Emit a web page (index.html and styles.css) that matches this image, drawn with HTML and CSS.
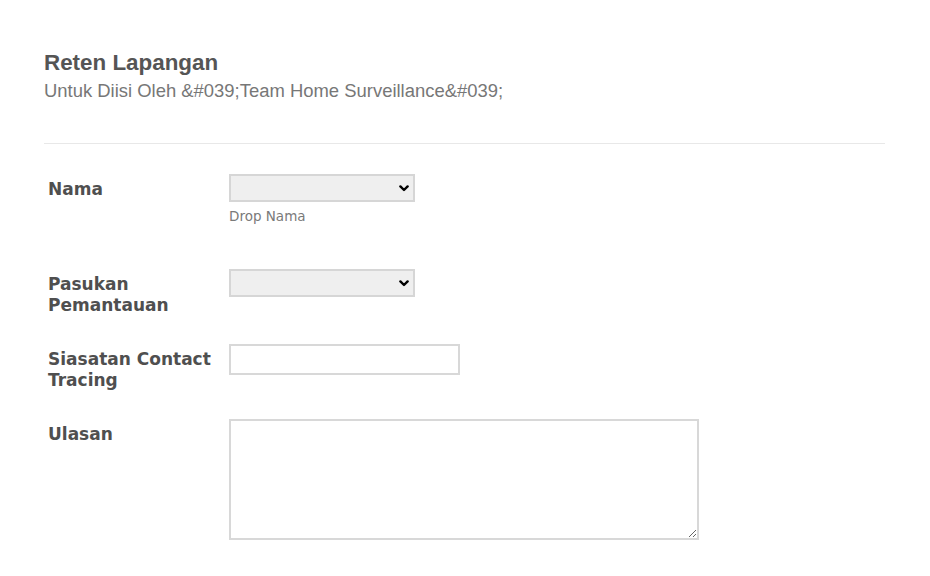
FILE: index.html
```html
<!DOCTYPE html>
<html lang="ms">
<head>
<meta charset="utf-8">
<title>Reten Lapangan</title>
<link rel="stylesheet" href="styles.css">
</head>
<body>
<div class="page">
  <header class="head">
    <h3 class="title">Reten Lapangan</h3>
    <p class="subtitle">Untuk Diisi Oleh &amp;#039;Team Home Surveillance&amp;#039;</p>
  </header>
  <hr class="rule">
  <form class="form">
    <div class="row row-first">
      <label class="label">Nama</label>
      <div class="field">
        <div class="select-wrap">
          <select class="select"><option></option></select>
          <svg class="chev" width="10" height="7" viewBox="0 0 10 7"><path d="M1.4 1.4 L5 5 L8.6 1.4" fill="none" stroke="#000" stroke-width="2.4" stroke-linecap="round" stroke-linejoin="round"/></svg>
        </div>
        <div class="desc">Drop Nama</div>
      </div>
    </div>
    <div class="row">
      <label class="label">Pasukan Pemantauan</label>
      <div class="field">
        <div class="select-wrap">
          <select class="select"><option></option></select>
          <svg class="chev" width="10" height="7" viewBox="0 0 10 7"><path d="M1.4 1.4 L5 5 L8.6 1.4" fill="none" stroke="#000" stroke-width="2.4" stroke-linecap="round" stroke-linejoin="round"/></svg>
        </div>
      </div>
    </div>
    <div class="row">
      <label class="label">Siasatan Contact Tracing</label>
      <div class="field">
        <input class="input" type="text">
      </div>
    </div>
    <div class="row">
      <label class="label">Ulasan</label>
      <div class="field">
        <textarea class="textarea"></textarea>
      </div>
    </div>
  </form>
</div>
</body>
</html>
```
FILE: styles.css
```css
html, body {
  margin: 0;
  padding: 0;
  background: #fff;
}
.page {
  padding: 50px 45px 0 44px;
  width: 841px;
}
.head {
  display: flex;
  flex-direction: column;
}
.title {
  margin: 0;
  font-family: "Liberation Sans", Arial, sans-serif;
  font-weight: bold;
  font-size: 22.4px;
  line-height: 26px;
  color: #555;
}
.subtitle {
  margin: 4px 0 0 0;
  font-family: "Liberation Sans", Arial, sans-serif;
  font-size: 18.45px;
  line-height: 22px;
  color: #777;
}
.rule {
  margin: 41px 0 0 0;
  border: 0;
  border-top: 1px solid #e8e8e8;
  height: 0;
}
.form {
  margin-top: 30px;
  display: flex;
  flex-direction: column;
  gap: 28px;
  padding-left: 4px;
}
.row {
  display: flex;
  align-items: flex-start;
}
.row-first {
  padding-bottom: 17px;
}
.label {
  width: 181px;
  flex: none;
  padding-top: 5px;
  font-family: "DejaVu Sans", Verdana, sans-serif;
  font-weight: bold;
  font-size: 17px;
  line-height: 21px;
  color: #4f4f4f;
}
.field {
  display: flex;
  flex-direction: column;
}
.select-wrap {
  position: relative;
  width: 186px;
  height: 28px;
}
.select {
  -webkit-appearance: none;
  appearance: none;
  box-sizing: border-box;
  width: 186px;
  height: 28px;
  margin: 0;
  background: #efefef;
  border: 2px solid #d6d6d6;
  border-radius: 0;
  font-family: "DejaVu Sans", sans-serif;
  font-size: 14px;
}
.chev {
  position: absolute;
  right: 6px;
  top: 11px;
  pointer-events: none;
}
.desc {
  margin-top: 6px;
  font-family: "DejaVu Sans", Verdana, sans-serif;
  font-size: 13.5px;
  line-height: 16px;
  color: #7a7a7a;
}
.input {
  box-sizing: border-box;
  width: 231px;
  height: 31px;
  margin: 0;
  padding: 0 4px;
  border: 2px solid #d8d8d8;
  border-radius: 0;
  background: #fff;
}
.textarea {
  display: block;
  box-sizing: border-box;
  width: 470px;
  height: 121px;
  margin: 0;
  padding: 4px;
  border: 2px solid #d8d8d8;
  border-radius: 0;
  background: #fff;
  resize: both;
}
```
